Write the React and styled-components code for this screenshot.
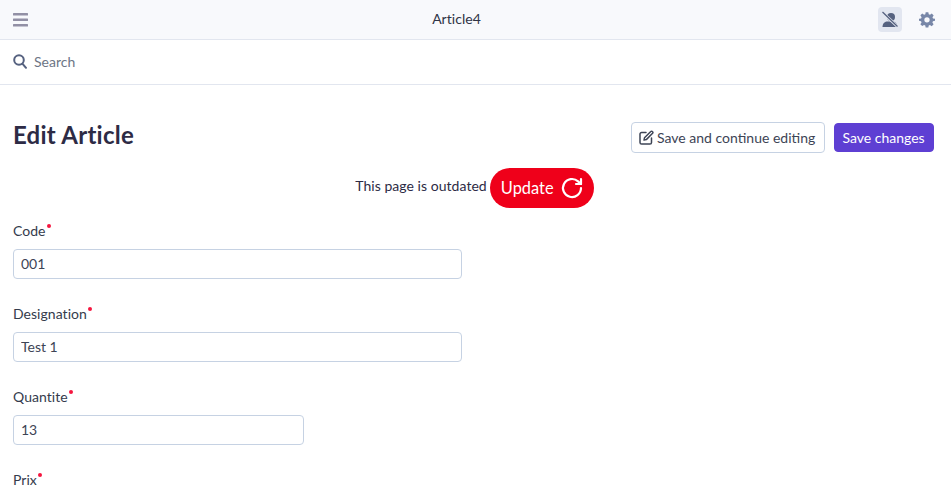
import React from "react";
import styled, { createGlobalStyle } from "styled-components";

const Global = createGlobalStyle`
  html, body { margin: 0; padding: 0; background: #fff; overflow: hidden; }
  body { font-family: "Lato", "Noto Sans", sans-serif; color: #2d2b45; letter-spacing: .04px; }
  * { box-sizing: border-box; }
`;
const Page = styled.div`width: 951px; height: 498px; overflow: hidden; display: flex; flex-direction: column;`;
const TopBar = styled.header`
  height: 40px; flex: none; background: #f8f9fc; border-bottom: 1px solid #e2e6ef;
  display: flex; align-items: center; justify-content: space-between; padding: 0 16px 0 13px; position: relative;
`;
const Title = styled.div`
  position: absolute; left: 0; right: 38px; text-align: center; font-size: 14px; color: #2f3446; top: 9px; line-height: 19px;
`;
const IconGroup = styled.div`display: flex; align-items: center; gap: 17px; z-index: 1;`;
const IconTile = styled.div`
  width: ${p => (p.$active ? 24 : 16)}px; height: 25px; border-radius: 4px; background: ${p => (p.$active ? "#e2e6f0" : "transparent")};
  display: flex; align-items: center; justify-content: center;
`;
const SearchBar = styled.div`
  height: 45px; flex: none; border-bottom: 1px solid #e2e6ef; display: flex; align-items: center; gap: 7px; padding: 0 13px 2px;
`;
const SearchText = styled.span`font-size: 14px; color: #6d7585;`;
const Content = styled.main`padding: 0 17px 0 13px; flex: 1;`;
const Header = styled.div`display: flex; justify-content: space-between; align-items: center; margin-top: 37px; height: 31px;`;
const Heading = styled.h1`margin: 0 0 5px; font-size: 24px; line-height: 32px; font-weight: 700; letter-spacing: .25px; color: #2d2b45;`;
const Actions = styled.div`display: flex; align-items: center; gap: 9px;`;
const OutlineButton = styled.button`
  width: 194px; height: 31px; padding: 0 7px; font: inherit; font-size: 14px; color: #3d4455; background: #fff;
  border: 1px solid #c6d2e3; border-radius: 4px; display: flex; align-items: center; gap: 3px; white-space: nowrap;
`;
const PrimaryButton = styled.button`
  width: 100px; height: 29px; padding: 0 1px 0 0; font: inherit; font-size: 14px; color: #fff; background: #5e3fd3;
  border: 1px solid #5e3fd3; border-radius: 4px;
`;
const Outdated = styled.div`display: flex; justify-content: center; align-items: center; gap: 3px; margin: 14px 0 0 2px; height: 41px;`;
const OutdatedText = styled.span`font-size: 14px; color: #2d2b45; margin-bottom: 5px;`;
const UpdateButton = styled.button`
  width: 104px; height: 40px; border-radius: 20px; border: none; background: #ef001a; color: #fff; font: inherit; font-size: 16.4px;
  display: flex; align-items: center; justify-content: center; gap: 6px; padding: 0 0 0 1px;
`;
const UpdateLabel = styled.span`margin-bottom: 1px;`;
const Form = styled.form`display: flex; flex-direction: column; gap: 25px; margin-top: 13px;`;
const Field = styled.div`display: flex; flex-direction: column;`;
const Label = styled.label`font-size: 14px; line-height: 20px; color: #343b4c; display: flex; height: 20px;`;
const Star = styled.span`width: 4px; height: 4px; border-radius: 50%; background: #f5163f; margin: 3px 0 0 1px;`;
const Input = styled.input`
  width: ${p => p.$w}px; height: 30px; margin-top: 8px; border: 1px solid #c6d2e3; border-radius: 4px; padding: 0 7px 2px;
  font: inherit; font-size: 14px; color: #3d4455; background: #fff; outline: none;
`;

export default function App() {
  return (
    <Page>
      <Global />
      <TopBar>
        <Title>Article4</Title>
        <svg width="15" height="14" viewBox="0 0 15 14" fill="#9290a5">
          <rect y="0" width="15" height="2.4" rx=".5" /><rect y="5.6" width="15" height="2.4" rx=".5" /><rect y="11" width="15" height="2.4" rx=".5" />
        </svg>
        <IconGroup>
          <IconTile $active>
            <svg width="20" height="18" viewBox="0 0 20 18" fill="#55617f">
              <circle cx="11" cy="6" r="4" />
              <path d="M2.5 16c0-3.6 2.6-5.4 5-5.4h5c2.6 0 4.6 1.8 5 5.4z" />
              <path d="M2 1l16 15" stroke="#e2e6f0" strokeWidth="3" />
              <path d="M2.5 1l15 14.5" stroke="#55617f" strokeWidth="1.3" />
            </svg>
          </IconTile>
          <IconTile>
            <svg width="17" height="17" viewBox="0 0 24 24" fill="#7887a8" fillRule="evenodd">
              <path d="M10 1h4l.6 3.1 1.9.8 2.7-1.8 2.8 2.8-1.8 2.7.8 1.9L24 11v3l-3.1.6-.8 1.9 1.8 2.7-2.8 2.8-2.7-1.8-1.8.8L14 24h-4l-.6-3.1-1.9-.8-2.7 1.8-2.8-2.8 1.8-2.7-.8-1.9L0 14v-3l3.1-.6.8-1.9-1.8-2.7 2.8-2.8 2.7 1.8 1.9-.8zM12 8.5a4 4 0 1 0 0 8 4 4 0 0 0 0-8z" />
            </svg>
          </IconTile>
        </IconGroup>
      </TopBar>
      <SearchBar>
        <svg width="14" height="15" viewBox="0 0 14 15" fill="none" stroke="#55617f" strokeWidth="2" strokeLinecap="round">
          <circle cx="6" cy="6" r="4.8" /><path d="M9.6 9.8l3.4 4" />
        </svg>
        <SearchText>Search</SearchText>
      </SearchBar>
      <Content>
        <Header>
          <Heading>Edit Article</Heading>
          <Actions>
            <OutlineButton>
              <svg width="15" height="15" viewBox="0 0 15 15" fill="none" stroke="#3d4455" strokeWidth="1.5" strokeLinejoin="round" strokeLinecap="round">
                <path d="M7 2.5H2.6A1.6 1.6 0 0 0 1 4.1v8.3A1.6 1.6 0 0 0 2.6 14h8.3a1.6 1.6 0 0 0 1.6-1.6V8" />
                <path d="M5.5 7.8L11.8 1.5a1.1 1.1 0 0 1 1.6 0l.2.2a1.1 1.1 0 0 1 0 1.6L7.3 9.6l-2.3.5z" />
              </svg>
              Save and continue editing
            </OutlineButton>
            <PrimaryButton>Save changes</PrimaryButton>
          </Actions>
        </Header>
        <Outdated>
          <OutdatedText>This page is outdated</OutdatedText>
          <UpdateButton>
            <UpdateLabel>Update</UpdateLabel>
            <svg width="24" height="24" viewBox="0 0 24 24" fill="none" stroke="#fff" strokeWidth="2.2" strokeLinecap="round" strokeLinejoin="round">
              <path d="M21 12a9 9 0 1 1-2.9-6.6L21 8" /><path d="M21 3v5h-5" />
            </svg>
          </UpdateButton>
        </Outdated>
        <Form>
          <Field><Label>Code<Star /></Label><Input $w={449} defaultValue="001" /></Field>
          <Field><Label>Designation<Star /></Label><Input $w={449} defaultValue="Test 1" /></Field>
          <Field><Label>Quantite<Star /></Label><Input $w={291} defaultValue="13" /></Field>
          <Field><Label>Prix<Star /></Label></Field>
        </Form>
      </Content>
    </Page>
  );
}
